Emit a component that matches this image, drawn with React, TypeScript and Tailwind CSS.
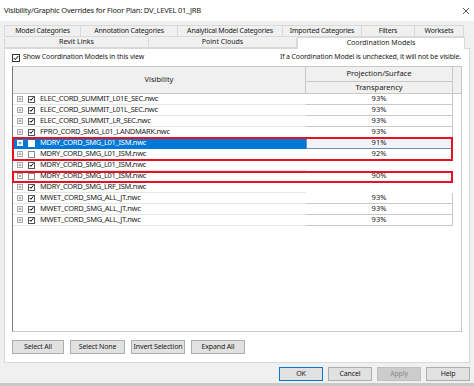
import React from 'react';

type Row = { name: string; checked: boolean; value: string; selected?: boolean };

const rows: Row[] = [
  { name: 'ELEC_CORD_SUMMIT_L01E_SEC.nwc', checked: true, value: '93%' },
  { name: 'ELEC_CORD_SUMMIT_L01L_SEC.nwc', checked: true, value: '93%' },
  { name: 'ELEC_CORD_SUMMIT_LR_SEC.nwc', checked: true, value: '93%' },
  { name: 'FPRO_CORD_SMG_L01_LANDMARK.nwc', checked: true, value: '93%' },
  { name: 'MDRY_CORD_SMG_L01_ISM.nwc', checked: false, value: '91%', selected: true },
  { name: 'MDRY_CORD_SMG_L01_ISM.nwc', checked: false, value: '92%' },
  { name: 'MDRY_CORD_SMG_L01_ISM.nwc', checked: true, value: '' },
  { name: 'MDRY_CORD_SMG_L01_ISM.nwc', checked: false, value: '90%' },
  { name: 'MDRY_CORD_SMG_LRF_ISM.nwc', checked: true, value: '' },
  { name: 'MWET_CORD_SMG_ALL_JT.nwc', checked: true, value: '93%' },
  { name: 'MWET_CORD_SMG_ALL_JT.nwc', checked: true, value: '93%' },
  { name: 'MWET_CORD_SMG_ALL_JT.nwc', checked: true, value: '93%' },
];

const tabsTop = [
  { label: 'Model Categories', w: 'w-[76px]' },
  { label: 'Annotation Categories', w: 'w-[97px]' },
  { label: 'Analytical Model Categories', w: 'w-[105px]' },
  { label: 'Imported Categories', w: 'w-[79px]' },
  { label: 'Filters', w: 'w-[53px]' },
  { label: 'Worksets', w: 'w-[50px]' },
];

const Check = ({ checked, light }: { checked: boolean; light?: boolean }) => (
  <span
    className={`w-[7px] h-[7px] border flex items-center justify-center shrink-0 bg-white ${
      light ? 'border-white' : checked ? 'border-[#555]' : 'border-[#8a8a8a]'
    }`}
  >
    {checked && (
      <svg width="6" height="6" viewBox="0 0 6 6">
        <path d="M0.8 3 L2.3 4.6 L5.2 1" stroke="#000" strokeWidth="1.2" fill="none" />
      </svg>
    )}
  </span>
);

const Expander = ({ light }: { light?: boolean }) => (
  <svg width="6" height="6" viewBox="0 0 6 6" className="shrink-0">
    <rect x="0.5" y="0.5" width="5" height="5" fill="#fff" stroke={light ? '#fff' : '#a8a8a8'} />
    <path d="M1.5 3 H4.5 M3 1.5 V4.5" stroke={light ? '#0078d7' : '#8a8a8a'} strokeWidth="0.8" />
  </svg>
);

const Btn = ({ label, w, cls = '' }: { label: string; w: string; cls?: string }) => (
  <div className={`${w} h-[14px] flex items-center justify-center whitespace-nowrap text-[7px] tracking-[-0.15px] ${cls}`}>
    {label}
  </div>
);

export default function App() {
  return (
    <div
      className="w-[474px] h-[386px] bg-[#f0f0f0] flex flex-col text-[#1a1a1a] overflow-hidden"
      style={{ fontFamily: '"Noto Sans", "Open Sans", sans-serif' }}
    >
      {/* title bar */}
      <div className="h-[21px] bg-white flex items-center justify-between pl-[4px] pr-[4px] shrink-0">
        <span className="text-[7.5px] tracking-[-0.2px]">Visibility/Graphic Overrides for Floor Plan: DV_LEVEL 01_JRB</span>
        <svg width="8" height="8" viewBox="0 0 8 8">
          <path d="M1 1 L7 7 M7 1 L1 7" stroke="#333" strokeWidth="0.8" />
        </svg>
      </div>

      {/* tabs */}
      <div className="mt-[4px] pl-[4px] flex flex-col">
        <div className="flex h-[12px]">
          {tabsTop.map((t) => (
            <div
              key={t.label}
              className={`${t.w} border border-[#d9d9d9] border-r-0 last:border-r bg-[#f0f0f0] flex items-center justify-center text-[7px] tracking-[-0.2px]`}
            >
              {t.label}
            </div>
          ))}
        </div>
        <div className="flex h-[11px] items-end">
          <div className="w-[145px] h-[10px] border border-t-0 border-[#d9d9d9] bg-[#f0f0f0] flex items-center justify-center text-[7px]">
            Revit Links
          </div>
          <div className="w-[148px] h-[10px] border border-t-0 border-l-0 border-[#d9d9d9] bg-[#f0f0f0] flex items-center justify-center text-[7px]">
            Point Clouds
          </div>
          <div className="w-[168px] h-[12px] -mb-px relative z-10 border border-b-0 border-[#d9d9d9] bg-white flex items-center justify-center text-[7px]">
            Coordination Models
          </div>
        </div>
      </div>

      {/* panel */}
      <div className="ml-[4px] w-[466px] h-[315px] bg-white border border-[#d9d9d9] flex flex-col px-[7px] shrink-0">
        <div className="h-[17px] flex items-center justify-between pr-[1px]">
          <div className="flex items-center gap-[3px]">
            <span className="w-[8px] h-[8px] border border-[#333] flex items-center justify-center">
              <svg width="6" height="6" viewBox="0 0 6 6">
                <path d="M0.8 3 L2.3 4.6 L5.2 1" stroke="#000" strokeWidth="1" fill="none" />
              </svg>
            </span>
            <span className="text-[7px] tracking-[-0.15px]">Show Coordination Models in this view</span>
          </div>
          <span className="text-[7px] tracking-[-0.15px]">If a Coordination Model is unchecked, it will not be visible.</span>
        </div>

        {/* table */}
        <div className="w-[450px] h-[266px] border border-[#c8c8c8] border-l-[#7a7a7a] relative">
          {/* header */}
          <div className="flex h-[27px] bg-[#f0f0f0] border-b border-[#c8c8c8]">
            <div className="w-[293px] flex items-center justify-center text-[7.5px] border-r border-[#c8c8c8]">Visibility</div>
            <div className="w-[147px] flex flex-col border-r border-[#c8c8c8]">
              <div className="h-[15px] flex items-center justify-center text-[7.5px] border-b border-[#c8c8c8]">Projection/Surface</div>
              <div className="flex-1 flex items-center justify-center text-[7.5px]">Transparency</div>
            </div>
          </div>
          {/* rows */}
          <div className="flex flex-col">
            {rows.map((r, i) => (
              <div key={i} className="flex h-[11px]">
                <div
                  className={`w-[293px] flex items-center pl-[4px] gap-[5px] border-b ${
                    r.selected ? 'bg-[#0078d7] text-white border-[#0078d7]' : 'border-[#e6e6e6]'
                  }`}
                >
                  <Expander light={r.selected} />
                  <Check checked={r.checked} light={r.selected} />
                  <span className="text-[7.5px] tracking-[-0.3px] leading-none">{r.name}</span>
                </div>
                <div
                  className={`w-[147px] flex items-center justify-center text-[7.5px] leading-none border-r border-b ${
                    r.value || r.selected ? 'border-[#c8c8c8]' : 'border-r-transparent border-b-transparent'
                  } ${r.selected ? 'bg-[#eef4fa] outline outline-1 outline-[#6f8fb5] -outline-offset-1' : ''}`}
                >
                  {r.value}
                </div>
              </div>
            ))}
          </div>

          {/* red highlight boxes */}
          <div className="absolute left-[-1px] top-[70px] w-[441px] h-[24px] border-2 border-[#e81123]" />
          <div className="absolute left-[-1px] top-[104px] w-[441px] h-[12px] border-2 border-[#e81123]" />
        </div>

        {/* bottom buttons */}
        <div className="flex gap-[6px] mt-[8px]">
          <Btn label="Select All" w="w-[52px]" cls="bg-[#e1e1e1] border border-[#adadad]" />
          <Btn label="Select None" w="w-[55px]" cls="bg-[#e1e1e1] border border-[#adadad]" />
          <Btn label="Invert Selection" w="w-[54px]" cls="bg-[#e1e1e1] border border-[#adadad]" />
          <Btn label="Expand All" w="w-[54px]" cls="bg-[#e1e1e1] border border-[#adadad]" />
        </div>
      </div>

      {/* footer */}
      <div className="flex justify-end gap-[5px] pr-[4px] mt-[4px]">
        <Btn label="OK" w="w-[44px]" cls="bg-[#e1e1e1] border border-[#0078d7]" />
        <Btn label="Cancel" w="w-[44px]" cls="bg-[#e1e1e1] border border-[#adadad]" />
        <Btn label="Apply" w="w-[44px]" cls="bg-[#cccccc] border border-[#bfbfbf] text-[#8a8a8a]" />
        <Btn label="Help" w="w-[44px]" cls="bg-[#e1e1e1] border border-[#adadad]" />
      </div>
      <div className="mt-auto h-[3px] bg-[#c8c8c8]" />
    </div>
  );
}
